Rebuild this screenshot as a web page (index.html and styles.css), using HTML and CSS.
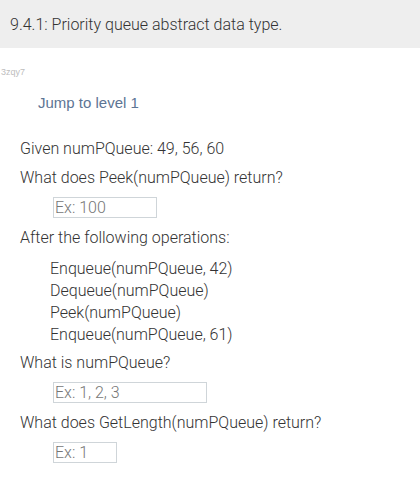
FILE: index.html
```html
<!DOCTYPE html>
<html>
<head>
<meta charset="utf-8">
<link rel="stylesheet" href="styles.css">
</head>
<body>
<header class="title-bar"><h1 class="title">9.4.1: Priority queue abstract data type.</h1></header>
<div class="code-id">3zqy7</div>
<div class="jump">Jump to level 1</div>
<div class="question">
  <p class="line">Given numPQueue: 49, 56, 60</p>
  <p class="line">What does Peek(numPQueue) return?</p>
  <div class="answer"><input class="box box-100" placeholder="Ex: 100"></div>
  <p class="line after">After the following operations:</p>
  <div class="ops">
    <div>Enqueue(numPQueue, 42)</div>
    <div>Dequeue(numPQueue)</div>
    <div>Peek(numPQueue)</div>
    <div>Enqueue(numPQueue, 61)</div>
  </div>
  <p class="line what-is">What is numPQueue?</p>
  <div class="answer"><input class="box box-list" placeholder="Ex: 1, 2, 3"></div>
  <p class="line get-length">What does GetLength(numPQueue) return?</p>
  <div class="answer"><input class="box box-1" placeholder="Ex: 1"></div>
</div>
</body>
</html>
```
FILE: styles.css
```css
html, body { margin: 0; padding: 0; background: #fff; }
body { font-family: Roboto, "Noto Sans", sans-serif; color: #333; }
.title-bar { background: #eeeeee; height: 48px; display: flex; align-items: center; padding-left: 10px; }
.title { margin: 0; font-size: 16px; font-weight: 300; color: #333; }
.code-id { font-family: "Liberation Sans", Arial, sans-serif; font-size: 9px; color: #bdbdbd; padding-left: 1px; margin-top: 19px; line-height: 10px; height: 10px; }
.jump { font-family: "Liberation Sans", Arial, sans-serif; font-size: 15px; color: #5d7594; padding-left: 38px; margin-top: 17px; line-height: 17px; height: 17px; }
.question { padding-left: 20px; margin-top: 28px; font-weight: 300; font-size: 16px; display: flex; flex-direction: column; gap: 9px; }
.line { margin: 0; line-height: 20px; height: 20px; }
.after { margin-top: 1px; }
.what-is { margin-top: -2px; }
.get-length { margin-top: 1px; }
.answer { padding-left: 33px; }
.box { display: block; box-sizing: border-box; height: 21px; border: 1px solid #cfd5d9; padding: 0 1px; font-family: Roboto, sans-serif; font-weight: 300; font-size: 16px; color: #333; outline: none; }
.box::placeholder { color: #767676; }
.box-100 { width: 104px; }
.box-list { width: 154px; }
.box-1 { width: 64px; }
.ops { padding-left: 30px; line-height: 22px; margin-top: 1px; }
```
